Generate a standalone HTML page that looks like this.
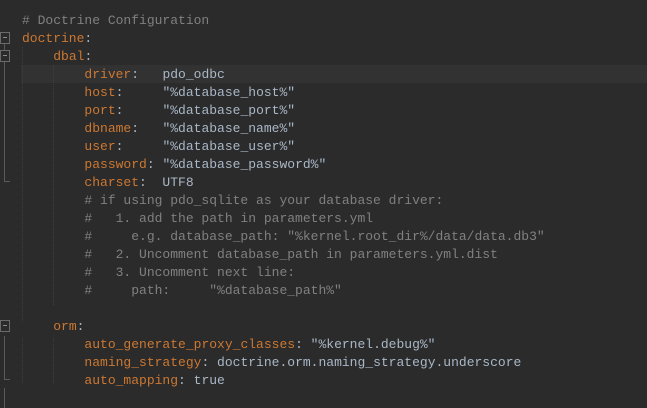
<!DOCTYPE html>
<html><head><style>
html,body{margin:0;padding:0;background:#2b2b2b;width:647px;height:408px;overflow:hidden}
.ed{position:absolute;left:22px;top:12px;font:13px/18px "Liberation Mono","Courier New",monospace;color:#a9b7c6;white-space:pre}
.k{color:#cc7832}.c{color:#808080}
.hl{position:absolute;left:21px;top:65px;width:626px;height:18px;background:#323232}
.g{position:absolute;background:#5a5a5a}
.box{position:absolute;left:0;width:8px;height:10px;border:1px solid #6a6a6a;background:#2b2b2b}
.box:after{content:"";position:absolute;left:2px;top:4px;width:4px;height:1px;background:#8a8a8a}
.ig{position:absolute;width:0;border-left:1px dotted #3e3e3e}
</style></head><body>
<div class="hl"></div>
<div class="ig" style="left:22px;top:47px;height:275px"></div>
<div class="ig" style="left:53px;top:65px;height:240px"></div>
<div class="ig" style="left:22px;top:338px;height:45px"></div>
<div class="ig" style="left:53px;top:338px;height:45px"></div>
<div class="g" style="left:4px;top:44px;width:1px;height:6px"></div>
<div class="g" style="left:4px;top:62px;width:1px;height:119px"></div>
<div class="g" style="left:4px;top:181px;width:6px;height:1px"></div>
<div class="g" style="left:4px;top:336px;width:1px;height:43px"></div>
<div class="g" style="left:4px;top:379px;width:6px;height:1px"></div>
<div class="g" style="left:4px;top:388px;width:1px;height:20px"></div>
<div class="box" style="top:32px"></div>
<div class="box" style="top:50px"></div>
<div class="box" style="top:320px"></div>
<div class="ed"><span class="c"># Doctrine Configuration</span>
<span class="k">doctrine</span>:
    <span class="k">dbal</span>:
        <span class="k">driver</span>:   pdo_odbc
        <span class="k">host</span>:     "%database_host%"
        <span class="k">port</span>:     "%database_port%"
        <span class="k">dbname</span>:   "%database_name%"
        <span class="k">user</span>:     "%database_user%"
        <span class="k">password</span>: "%database_password%"
        <span class="k">charset</span>:  UTF8
<span class="c">        # if using pdo_sqlite as your database driver:
        #   1. add the path in parameters.yml
        #     e.g. database_path: "%kernel.root_dir%/data/data.db3"
        #   2. Uncomment database_path in parameters.yml.dist
        #   3. Uncomment next line:
        #     path:     "%database_path%"</span>

    <span class="k">orm</span>:
        <span class="k">auto_generate_proxy_classes</span>: "%kernel.debug%"
        <span class="k">naming_strategy</span>: doctrine.orm.naming_strategy.underscore
        <span class="k">auto_mapping</span>: true</div>
</body></html>
